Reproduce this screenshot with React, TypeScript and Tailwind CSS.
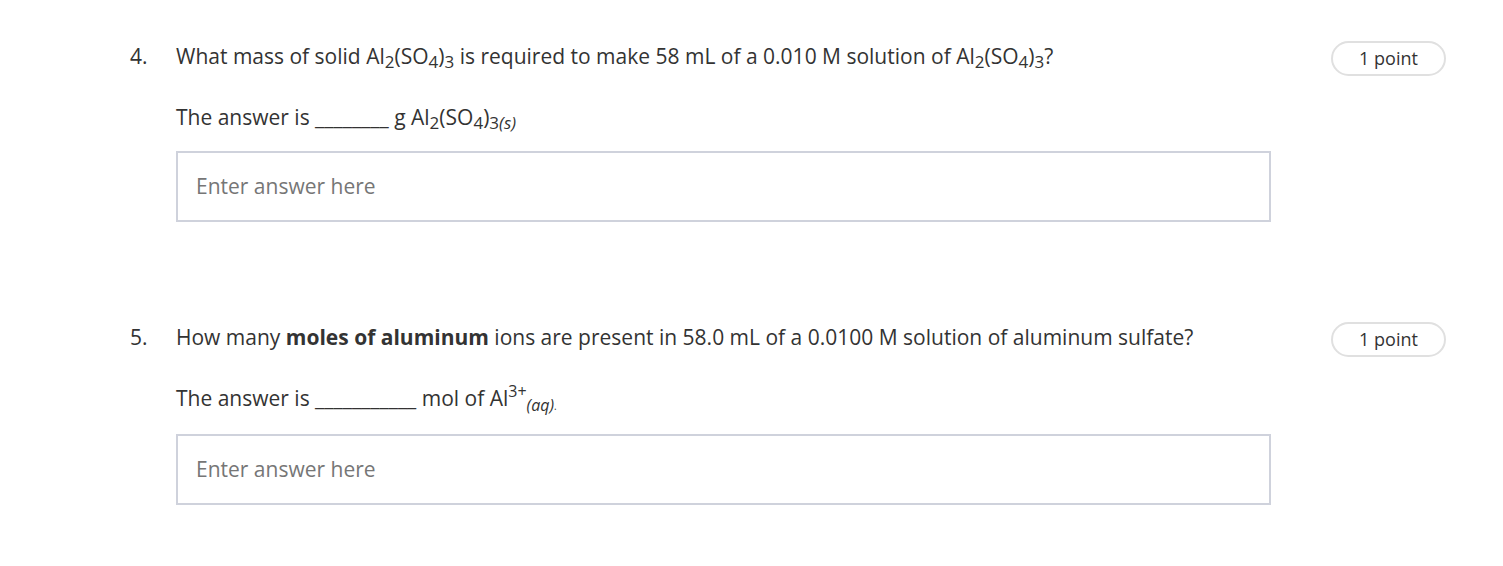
const font = { fontFamily: '"Open Sans", "Liberation Sans", sans-serif' };

function Sub({ children, italic }: { children: React.ReactNode; italic?: boolean }) {
  return (
    <span className={`text-[17px] relative top-[4px] ${italic ? "italic" : ""}`}>
      {children}
    </span>
  );
}

function Al2SO43() {
  return (
    <>
      Al<Sub>2</Sub>(SO<Sub>4</Sub>)<Sub>3</Sub>
    </>
  );
}

function Question({
  num,
  question,
  answer,
}: {
  num: number;
  question: React.ReactNode;
  answer: React.ReactNode;
}) {
  return (
    <div className="flex pl-[130px] pr-[57px]">
      <div className="w-[46px] shrink-0 text-[21px] leading-[32px] text-[#333]">{num}.</div>
      <div className="flex-1">
        <div className="flex items-start justify-between">
          <div className="text-[21px] leading-[32px] text-[#333]">{question}</div>
          <div className="mt-[1px] flex h-[35px] w-[115px] items-center justify-center rounded-full border-2 border-[#e0e0e0] text-[18px] text-[#333]">
            1 point
          </div>
        </div>
        <div className="mt-[25px] text-[21px] leading-[32px] text-[#333]">{answer}</div>
        <div className="mt-[16px] w-[1095px] h-[71px] border-2 border-[#cfd2dc] flex items-center px-[18px] text-[21px] text-[#767676]">
          Enter answer here
        </div>
      </div>
    </div>
  );
}

export default function App() {
  return (
    <div className="w-[1503px] h-[566px] bg-white pt-[40px]" style={font}>
      <Question
        num={4}
        question={
          <>
            What mass of solid <Al2SO43 /> is required to make 58 mL of a 0.010 M solution of <Al2SO43 />?
          </>
        }
        answer={
          <>
            The answer is ________ g <Al2SO43 />
            <Sub italic>(s)</Sub>
          </>
        }
      />
      <div className="h-[99px]" />
      <Question
        num={5}
        question={
          <>
            How many <b className="font-bold">moles of aluminum</b> ions are present in 58.0 mL of a 0.0100 M solution of aluminum sulfate?
          </>
        }
        answer={
          <>
            The answer is ___________ mol of Al
            <span className="text-[16px] relative top-[-9px]">3+</span>
            <span className="text-[16px] italic relative top-[5px]">(aq)</span>
            <span className="text-[10px] relative top-[4px]">.</span>
          </>
        }
      />
    </div>
  );
}
